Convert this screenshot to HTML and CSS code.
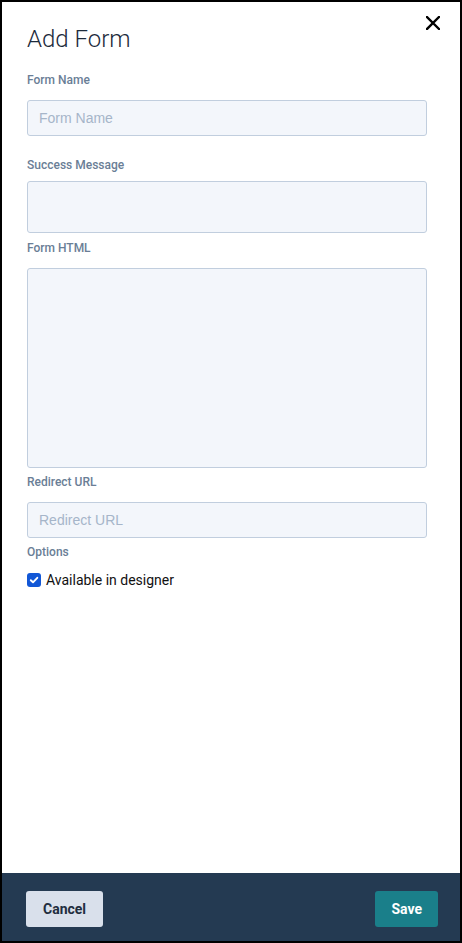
FILE: index.html
```html
<!DOCTYPE html>
<html lang="en">
<head>
<meta charset="utf-8">
<title>Add Form</title>
<link rel="stylesheet" href="styles.css">
</head>
<body>
<div class="modal">
  <div class="modal-body">
    <div class="header">
      <h1 class="title">Add Form</h1>
      <button class="close" aria-label="Close">
        <svg width="14" height="14" viewBox="0 0 14 14"><path d="M1 1L13 13M13 1L1 13" stroke="#000" stroke-width="2.4" stroke-linecap="square" fill="none"/></svg>
      </button>
    </div>
    <div class="field field-name">
      <label class="label">Form Name</label>
      <input class="input" type="text" placeholder="Form Name">
    </div>
    <div class="field field-success">
      <label class="label label-tight">Success Message</label>
      <textarea class="input textarea-sm"></textarea>
    </div>
    <div class="field field-html">
      <label class="label">Form HTML</label>
      <textarea class="input textarea-lg"></textarea>
    </div>
    <div class="field field-redirect">
      <label class="label">Redirect URL</label>
      <input class="input" type="text" placeholder="Redirect URL">
    </div>
    <div class="field">
      <label class="label">Options</label>
      <div class="check-row">
        <span class="checkbox">
          <svg width="10" height="10" viewBox="0 0 10 10"><path d="M1.8 5.2L4 7.3L8.3 2.8" stroke="#fff" stroke-width="1.9" fill="none" stroke-linecap="round" stroke-linejoin="round"/></svg>
        </span>
        <span class="check-text">Available in designer</span>
      </div>
    </div>
  </div>
  <div class="footer">
    <button class="btn btn-cancel">Cancel</button>
    <button class="btn btn-save">Save</button>
  </div>
</div>
</body>
</html>
```

FILE: styles.css
```css
* { box-sizing: border-box; }
html, body { margin: 0; padding: 0; }
body { font-family: Roboto, "Liberation Sans", sans-serif; background: #fff; }

.modal {
  width: 462px;
  height: 943px;
  border: 2px solid #000;
  display: flex;
  flex-direction: column;
  background: #fff;
}

.modal-body {
  flex: 1;
  padding: 9px 33px 0 25px;
}

.header {
  display: flex;
  justify-content: space-between;
  align-items: flex-start;
  height: 42px;
}

.title {
  margin: 14px 0 0 0;
  font-size: 24px;
  line-height: 28px;
  font-weight: 300;
  color: #1c2a3b;
}

.close {
  width: 24px;
  height: 24px;
  margin-right: -18px;
  padding: 0;
  border: 0;
  background: transparent;
  display: flex;
  align-items: center;
  justify-content: center;
}

.field { display: flex; flex-direction: column; }

.label {
  display: block;
  font-size: 12px;
  line-height: 16px;
  font-weight: 500;
  color: #6a7e96;
  margin-bottom: 12px;
}
.label-tight { margin-bottom: 8px; }

.field-name { margin-top: 19px; margin-bottom: 21px; }
.field-success { margin-bottom: 7px; }
.field-html { margin-bottom: 6px; }
.field-redirect { margin-bottom: 6px; }

.input {
  width: 400px;
  height: 36px;
  margin: 0;
  padding: 0 11px;
  border: 1px solid #c1cede;
  border-radius: 3px;
  background: #f3f6fb;
  font-family: "Liberation Sans", Arial, sans-serif;
  font-size: 14px;
  color: #1c2a3b;
  outline: none;
}
.input::placeholder { color: #a6b5c9; }

textarea.input { resize: none; display: block; padding: 8px 11px; }
.textarea-sm { height: 52px; }
.textarea-lg { height: 200px; }

.check-row {
  display: flex;
  align-items: center;
  gap: 5px;
  height: 16px;
}
.checkbox {
  width: 14px;
  height: 14px;
  border-radius: 3px;
  background: #1257d6;
  display: flex;
  align-items: center;
  justify-content: center;
}
.check-text {
  font-size: 14px;
  line-height: 16px;
  color: #111;
}

.footer {
  height: 68px;
  background: #243a52;
  display: flex;
  justify-content: space-between;
  align-items: flex-start;
  padding: 18px 22px 0 24px;
}

.btn {
  height: 36px;
  padding: 0 16px;
  border: 0;
  border-radius: 3px;
  font-family: Roboto, "Liberation Sans", sans-serif;
  font-size: 14px;
  font-weight: 700;
}
.btn-cancel { background: #d9e0eb; color: #1f2e40; padding: 0 17px; }
.btn-save { background: #1a7f8a; color: #fff; }
```
